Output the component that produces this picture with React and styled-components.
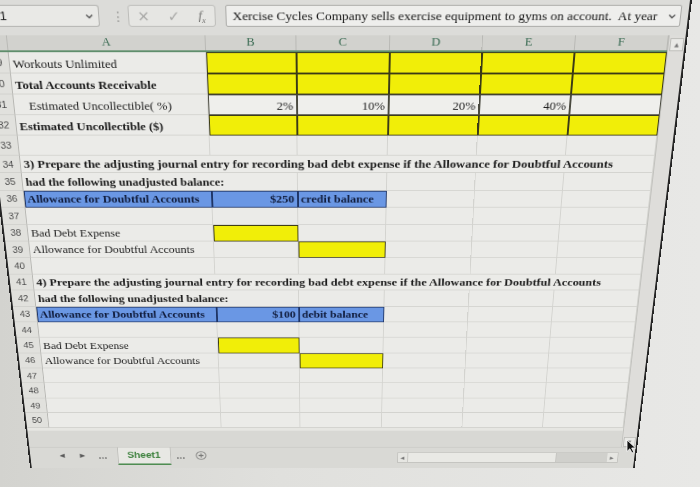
import React from 'react'
import styled, { createGlobalStyle } from 'styled-components'

const GlobalStyle = createGlobalStyle`
  html, body {
    margin: 0;
    padding: 0;
  }
  body {
    background: #e3e3e0;
    font-family: 'Liberation Serif', serif;
    overflow: hidden;
  }
`

// row header + columns A..F
const COLS = '26px 201px 92px 95px 94px 94px 94px'

const FILLS = {
    yellow: { bg: '#f1ee08', line: '#3b3a16' },
    blue: { bg: '#6a97e4', line: '#1f3566' },
    box: { bg: '#efefec', line: '#4a4a40' },
}

const Page = styled.div`
    position: relative;
    width: 700px;
    height: 487px;
    overflow: hidden;
    background: linear-gradient(90deg, #d3d3cf 0%, #e0e0dd 40%, #e8e8e6 100%);
`
// the photo looks down on the monitor, so the whole window leans back
const Screen = styled.div`
    width: 717px;
    margin-left: -25px;
    box-sizing: border-box;
    border-left: 2px solid #262626;
    border-right: 2px solid #262626;
    background: #dcdcd9;
    transform-origin: 351.5px 0;
    transform: perspective(800px) rotateX(-15deg);
`
const FormulaBar = styled.div`
    display: flex;
    align-items: flex-start;
    height: 36.5px;
    padding-top: 5px;
    box-sizing: border-box;
`
const NameBox = styled.div`
    width: 121px;
    height: 23px;
    box-sizing: border-box;
    border: 1px solid #b3b3b0;
    border-left: none;
    border-radius: 0 3px 3px 0;
    background: #e9e9e6;
    display: flex;
    align-items: center;
    justify-content: space-between;
    padding: 0 5px 0 12px;
    font: 13px 'Liberation Sans', sans-serif;
    color: #222;
`
const Dots = styled.span`
    width: 18px;
    margin-left: 10px;
    height: 23px;
    display: flex;
    align-items: center;
    justify-content: center;
    color: #9a9a98;
    font: 14px 'DejaVu Sans', sans-serif;
`
const FxBox = styled.div`
    width: 88px;
    height: 23px;
    margin-left: 1px;
    box-sizing: border-box;
    border: 1px solid #bdbdba;
    border-radius: 3px;
    background: #e6e6e3;
    display: flex;
    align-items: center;
`
const FxGlyph = styled.span`
    width: ${(p) => p.$w}px;
    text-align: center;
    color: ${(p) => p.$color || '#a8a8a6'};
    font: ${(p) => p.$font || "15px 'DejaVu Sans', sans-serif"};
`
const Input = styled.div`
    width: 458px;
    height: 23px;
    margin-left: 10px;
    box-sizing: border-box;
    border: 1px solid #aaaaa7;
    border-radius: 2px;
    background: #eeeeec;
    display: flex;
    align-items: center;
    justify-content: space-between;
    padding: 0 4px 0 6px;
    font: 13.4px 'Liberation Serif', serif;
    color: #151515;
    white-space: pre;
`
const Sheet = styled.div`
    display: flex;
`
const GridArea = styled.div`
    width: 696px;
    display: flex;
    flex-direction: column;
`
const HeaderRow = styled.div`
    display: grid;
    grid-template-columns: ${COLS};
    height: 18.5px;
    box-sizing: border-box;
    background: #d2d2ce;
    border-bottom: 2px solid #5f8e6c;
`
const ColHead = styled.div`
    display: flex;
    align-items: center;
    justify-content: center;
    border-right: 1px solid #b9b9b5;
    font: 12.5px 'Liberation Serif', serif;
    color: #35684f;
`
const Row = styled.div`
    display: grid;
    grid-template-columns: ${COLS};
    height: ${(p) => p.$h}px;
    background: #ebebe8;
`
const RowHead = styled.div`
    display: flex;
    align-items: center;
    justify-content: center;
    background: #e1e1dd;
    border-right: 1px solid #b7b7b3;
    border-bottom: 1px solid #d0d0cc;
    font: 10.5px 'Liberation Sans', sans-serif;
    color: #4a4a4a;
`
const Cell = styled.div`
    grid-column: span ${(p) => p.$span || 1};
    min-width: 0;
    display: flex;
    align-items: flex-end;
    justify-content: ${(p) => (p.$align === 'right' ? 'flex-end' : 'flex-start')};
    padding: 0 ${(p) => (p.$align === 'right' ? 3 : 0)}px 2px ${(p) => 3 + (p.$indent || 0)}px;
    border-right: 1px solid ${(p) => (p.$fill ? FILLS[p.$fill].line : '#d3d3cf')};
    border-bottom: 1px solid ${(p) => (p.$fill ? FILLS[p.$fill].line : '#d3d3cf')};
    box-shadow: ${(p) => (p.$fill ? `inset 1px 1px 0 ${FILLS[p.$fill].line}` : 'none')};
    background: ${(p) => (p.$fill ? FILLS[p.$fill].bg : 'transparent')};
    font-size: ${(p) => (p.$span === 6 ? 13.4 : 13)}px;
    font-weight: ${(p) => (p.$bold ? 700 : 400)};
    color: ${(p) => (p.$fill === 'blue' ? '#0f1b3b' : '#1b1b1b')};
    white-space: nowrap;
    line-height: 15px;
`
const Filler = styled.div`
    height: 27px;
    background: linear-gradient(#e6e6e2 0, #e6e6e2 4px, #d8d8d4 4px);
`
const VScroll = styled.div`
    width: 17px;
    box-sizing: border-box;
    border-left: 1px solid #c2c2be;
    background: #deddda;
    display: flex;
    flex-direction: column;
    justify-content: space-between;
    align-items: center;
    padding: 3px 0 0;
`
const ArrowBox = styled.span`
    width: 14px;
    height: 14px;
    box-sizing: border-box;
    border: 1px solid #bdbdb9;
    background: #e9e9e6;
    display: flex;
    align-items: center;
    justify-content: center;
    font: 6px 'DejaVu Sans', sans-serif;
    color: #777;
`
const TabBar = styled.div`
    display: flex;
    align-items: flex-start;
    height: 31px;
    box-sizing: border-box;
    background: #d9d9d5;
    border-top: 1px solid #c6c6c2;
    padding-left: 25.6px;
`
const NavBtn = styled.span`
    width: 24px;
    height: 24px;
    display: flex;
    align-items: center;
    justify-content: center;
    font: ${(p) => (p.$dots ? "bold 11px 'Liberation Sans', sans-serif" : "8px 'DejaVu Sans', sans-serif")};
    color: #5a5a5a;
`
const SheetTab = styled.div`
    width: 63px;
    height: 25px;
    margin-left: 5px;
    box-sizing: border-box;
    background: #e8e8e4;
    border: 1px solid #c0c0bc;
    border-top: none;
    border-bottom: 2px solid #4f8d52;
    display: flex;
    align-items: center;
    justify-content: center;
    font: bold 12px 'Liberation Sans', sans-serif;
    color: #3f823f;
`
const HScroll = styled.div`
    display: flex;
    width: 261px;
    height: 15px;
    margin: 7px 0 0 219px;
    box-sizing: border-box;
    border: 1px solid #c3c3bf;
    background: #d0d0cc;
`
const HPart = styled.span`
    width: ${(p) => p.$w}px;
    box-sizing: border-box;
    display: flex;
    align-items: center;
    justify-content: center;
    background: ${(p) => p.$bg || 'transparent'};
    border-right: ${(p) => (p.$edge ? '1px solid #c3c3bf' : 'none')};
    font: 6px 'DejaVu Sans', sans-serif;
    color: #777;
`
const Pointer = styled.svg`
    position: absolute;
    left: 626px;
    top: 439px;
`

const Chevron = () => (
    <svg width="8" height="6" viewBox="0 0 8 6">
        <path d="M1 1.5 L4 4.5 L7 1.5" fill="none" stroke="#555" strokeWidth="1.4" />
    </svg>
)

const PlusCircle = () => (
    <svg width="13" height="13" viewBox="0 0 13 13">
        <circle cx="6.5" cy="6.5" r="5.6" fill="none" stroke="#8a8a88" strokeWidth="1.2" />
        <path d="M6.5 3.6 V9.4 M3.6 6.5 H9.4" stroke="#7a7a78" strokeWidth="1.3" />
    </svg>
)

const Y = 'yellow'
const BL = 'blue'
const BX = 'box'

const rows = [
    { n: 29, h: 23, cells: [{ text: 'Workouts Unlimited' }, { fill: Y }, { fill: Y }, { fill: Y }, { fill: Y }, { fill: Y }] },
    { n: 30, h: 23, cells: [{ text: 'Total Accounts Receivable', bold: true }, { fill: Y }, { fill: Y }, { fill: Y }, { fill: Y }, { fill: Y }] },
    {
        n: 31,
        h: 23,
        cells: [
            { text: 'Estimated Uncollectible( %)', indent: 12 },
            { fill: BX, text: '2%', align: 'right' },
            { fill: BX, text: '10%', align: 'right' },
            { fill: BX, text: '20%', align: 'right' },
            { fill: BX, text: '40%', align: 'right' },
            { fill: BX },
        ],
    },
    { n: 32, h: 23, cells: [{ text: 'Estimated Uncollectible ($)', bold: true }, { fill: Y }, { fill: Y }, { fill: Y }, { fill: Y }, { fill: Y }] },
    { n: 33, h: 23, cells: [] },
    {
        n: 34,
        cells: [{ span: 6, bold: true, text: '3) Prepare the adjusting journal entry for recording bad debt expense if the Allowance for Doubtful Accounts' }],
    },
    { n: 35, cells: [{ span: 2, bold: true, text: 'had the following unadjusted balance:' }] },
    {
        n: 36,
        cells: [
            { fill: BL, bold: true, text: 'Allowance for Doubtful Accounts' },
            { fill: BL, bold: true, text: '$250', align: 'right' },
            { fill: BL, bold: true, text: 'credit balance' },
        ],
    },
    { n: 37, cells: [] },
    { n: 38, cells: [{ text: 'Bad Debt Expense' }, { fill: Y }] },
    { n: 39, cells: [{ text: 'Allowance for Doubtful Accounts' }, {}, { fill: Y }] },
    { n: 40, cells: [] },
    {
        n: 41,
        cells: [{ span: 6, bold: true, text: '4) Prepare the adjusting journal entry for recording bad debt expense if the Allowance for Doubtful Accounts' }],
    },
    { n: 42, cells: [{ span: 2, bold: true, text: 'had the following unadjusted balance:' }] },
    {
        n: 43,
        cells: [
            { fill: BL, bold: true, text: 'Allowance for Doubtful Accounts' },
            { fill: BL, bold: true, text: '$100', align: 'right' },
            { fill: BL, bold: true, text: 'debit balance' },
        ],
    },
    { n: 44, cells: [] },
    { n: 45, cells: [{ text: 'Bad Debt Expense' }, { fill: Y }] },
    { n: 46, cells: [{ text: 'Allowance for Doubtful Accounts' }, {}, { fill: Y }] },
    { n: 47, cells: [] },
    { n: 48, cells: [] },
    { n: 49, cells: [] },
    { n: 50, cells: [] },
]

// fill the rest of a row with blank cells so every row has six columns
const padCells = (cells) => {
    const out = [...cells]
    let used = out.reduce((s, c) => s + (c.span || 1), 0)
    while (used < 6) {
        out.push({})
        used += 1
    }
    return out
}

const SheetRow = ({ n, h = 20.4, cells }) => (
    <Row $h={h}>
        <RowHead>{n}</RowHead>
        {padCells(cells).map((c, i) => (
            <Cell key={i} $span={c.span} $fill={c.fill} $bold={c.bold} $align={c.align} $indent={c.indent}>
                {c.text}
            </Cell>
        ))}
    </Row>
)

export default function App() {
    return (
        <Page>
            <GlobalStyle />
            <Screen>
                <FormulaBar>
                    <NameBox>
                        <span>A1</span>
                        <Chevron />
                    </NameBox>
                    <Dots>⋮</Dots>
                    <FxBox>
                        <FxGlyph $w={30}>×</FxGlyph>
                        <FxGlyph $w={32}>✓</FxGlyph>
                        <FxGlyph $w={26} $color="#6f6f6d" $font="italic 13px 'Liberation Serif', serif">
                            f<sub style={{ fontSize: 8 }}>x</sub>
                        </FxGlyph>
                    </FxBox>
                    <Input>
                        <span>Xercise Cycles Company sells exercise equipment to gyms on account.  At year</span>
                        <Chevron />
                    </Input>
                </FormulaBar>
                <Sheet>
                    <GridArea>
                        <HeaderRow>
                            <ColHead />
                            {['A', 'B', 'C', 'D', 'E', 'F'].map((l) => (
                                <ColHead key={l}>{l}</ColHead>
                            ))}
                        </HeaderRow>
                        {rows.map((r) => (
                            <SheetRow key={r.n} {...r} />
                        ))}
                        <Filler />
                    </GridArea>
                    <VScroll>
                        <ArrowBox>▲</ArrowBox>
                        <ArrowBox>▼</ArrowBox>
                    </VScroll>
                </Sheet>
                <TabBar>
                    <NavBtn>◀</NavBtn>
                    <NavBtn>▶</NavBtn>
                    <NavBtn $dots>…</NavBtn>
                    <SheetTab>Sheet1</SheetTab>
                    <NavBtn $dots>…</NavBtn>
                    <NavBtn>
                        <PlusCircle />
                    </NavBtn>
                    <HScroll>
                        <HPart $w={12} $bg="#e6e6e2" $edge>◀</HPart>
                        <HPart $w={175} $bg="#e9e9e5" $edge />
                        <HPart $w={60} />
                        <HPart $w={12} $bg="#e6e6e2">▶</HPart>
                    </HScroll>
                </TabBar>
            </Screen>
            <Pointer width="11" height="15" viewBox="0 0 11 15">
                <path d="M1 1 L1 12.5 L3.8 9.8 L6 14 L7.8 13.2 L5.7 9 L9.6 9 Z" fill="#111" stroke="#fff" strokeWidth="0.8" />
            </Pointer>
        </Page>
    )
}
